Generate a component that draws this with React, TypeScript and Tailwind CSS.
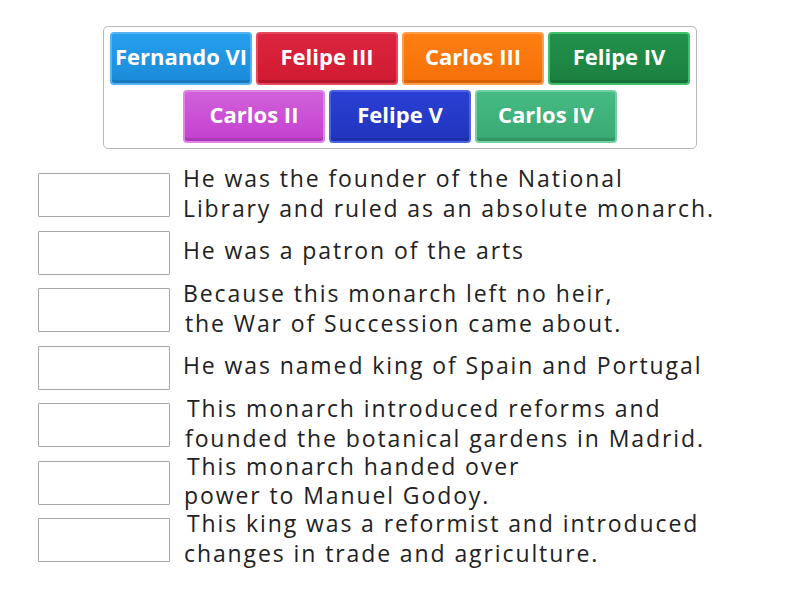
import React from 'react';

type Tile = { label: string; cls: string };

const topRow: Tile[] = [
  { label: 'Fernando VI', cls: 'border-[#52b2f2] bg-gradient-to-b from-[#25a0ee] to-[#1b8ad8]' },
  { label: 'Felipe III', cls: 'border-[#e4495c] bg-gradient-to-b from-[#dc2540] to-[#cf1a30]' },
  { label: 'Carlos III', cls: 'border-[#ff9d48] bg-gradient-to-b from-[#ff7f12] to-[#f57008]' },
  { label: 'Felipe IV', cls: 'border-[#3fbf6a] bg-gradient-to-b from-[#22914c] to-[#1b8040]' },
];

const bottomRow: Tile[] = [
  { label: 'Carlos II', cls: 'border-[#de85e6] bg-gradient-to-b from-[#d160da] to-[#c43fd0]' },
  { label: 'Felipe V', cls: 'border-[#4c62e4] bg-gradient-to-b from-[#2a40d2] to-[#2034bf]' },
  { label: 'Carlos IV', cls: 'border-[#70d2a0] bg-gradient-to-b from-[#46bb84] to-[#3aa873]' },
];

// each line: [text, indent class]
const prompts: [string, string][][] = [
  [['He was the founder of the National', ''], ['Library and ruled as an absolute monarch.', '']],
  [['He was a patron of the arts', '']],
  [['Because this monarch left no heir,', ''], ['the War of Succession came about.', 'pl-[2px]']],
  [['He was named king of Spain and Portugal', '']],
  [['This monarch introduced reforms and', 'pl-[4px]'], ['founded the botanical gardens in Madrid.', 'pl-[2px]']],
  [['This monarch handed over', 'pl-[4px]'], ['power to Manuel Godoy.', 'pl-[1px]']],
  [['This king was a reformist and introduced', 'pl-[4px]'], ['changes in trade and agriculture.', 'pl-[1px]']],
];

const TileButton = ({ tile }: { tile: Tile }) => (
  <div
    className={`w-[142px] h-[53px] pb-[6px] rounded-[4px] border-2 flex items-center justify-center text-white font-bold text-[22px] leading-none whitespace-nowrap shadow-[inset_0_-3px_0_rgba(0,0,0,0.12)] ${tile.cls}`}
  >
    {tile.label}
  </div>
);

export default function App() {
  return (
    <div className="w-[800px] h-[600px] bg-white font-['Open_Sans',sans-serif] text-[#222]">
      <div className="pt-[26px] flex justify-center">
        <div className="w-[594px] border border-[#b8b8b8] rounded-[5px] px-[6px] py-[5px] flex flex-col items-center gap-[5px]">
          <div className="flex gap-[4px]">
            {topRow.map((t) => (
              <TileButton key={t.label} tile={t} />
            ))}
          </div>
          <div className="flex gap-[4px]">
            {bottomRow.map((t) => (
              <TileButton key={t.label} tile={t} />
            ))}
          </div>
        </div>
      </div>

      <div className="mt-[24px] pl-[38px] flex flex-col gap-[13.5px]">
        {prompts.map((lines, i) => (
          <div key={i} className="flex items-center h-[44px]">
            <div className="w-[132px] h-[44px] shrink-0 border border-[#a8a8a8] rounded-[1px]" />
            <div className="ml-[13px] pb-[3px] text-[23px] tracking-[1.9px] leading-[29.5px] whitespace-nowrap">
              {lines.map(([text, indent]) => (
                <div key={text} className={indent}>
                  {text}
                </div>
              ))}
            </div>
          </div>
        ))}
      </div>
    </div>
  );
}
